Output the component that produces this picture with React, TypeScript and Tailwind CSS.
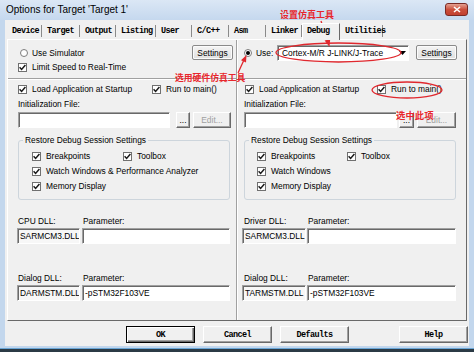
import React from "react";

const MONO = "font-['Liberation_Mono','Courier_New',monospace] font-bold text-[8.5px] tracking-[-0.6px] leading-[8px]";

function Check() {
  return (
    <span className="w-[9px] h-[9px] shrink-0 border border-[#707070] bg-white flex items-center justify-center">
      <svg width="7" height="7" viewBox="0 0 7 7">
        <path d="M0.6 3.3 L2.6 5.4 L6.4 1.1" stroke="#1a1a1a" strokeWidth="1.5" fill="none" />
      </svg>
    </span>
  );
}

function Radio({ on }: { on?: boolean }) {
  return (
    <span className="w-[8px] h-[8px] shrink-0 rounded-full border border-[#7d7d7d] bg-white flex items-center justify-center">
      {on && <span className="w-[4px] h-[4px] rounded-full bg-black" />}
    </span>
  );
}

function CheckLabel({ text, className = "" }: { text: string; className?: string }) {
  return (
    <div className={`flex items-center h-[10px] ${className}`}>
      <Check />
      <span className="ml-[5px] leading-[10px] whitespace-nowrap">{text}</span>
    </div>
  );
}

function Field({ className = "", children }: { className?: string; children?: React.ReactNode }) {
  return (
    <div
      className={`h-[16px] border border-t-[#a0a0a0] border-l-[#a0a0a0] border-r-white border-b-white shadow-[inset_1px_1px_0_#696969] flex items-center pl-[2px] whitespace-nowrap overflow-hidden ${className}`}
    >
      {children}
    </div>
  );
}

function ClassicBtn({ className = "", children, dim }: { className?: string; children?: React.ReactNode; dim?: boolean }) {
  return (
    <div
      className={`h-[16px] bg-[#f0f0f0] border border-t-white border-l-white border-r-[#696969] border-b-[#696969] shadow-[inset_-1px_-1px_0_#a0a0a0] flex items-center justify-center leading-[10px] ${dim ? "text-[#a0a0a0]" : "text-black"} ${className}`}
    >
      {children}
    </div>
  );
}

function SettingsBtn({ className = "" }: { className?: string }) {
  return (
    <div
      className={`h-[15px] w-[41px] rounded-[2px] border border-[#8a8a8a] bg-gradient-to-b from-[#f4f4f4] to-[#e0e0e0] shadow-[inset_0_0_0_1px_#fbfbfb] flex items-center justify-center leading-[10px] ${className}`}
    >
      Settings
    </div>
  );
}

function Separator() {
  return <div className="h-[2px] border-t border-t-[#a0a0a0] border-b border-b-white" />;
}

function LeftColumn() {
  return (
    <div className="w-[228px] shrink-0 flex flex-col">
      <div className="mt-[5px] h-[15px] flex items-center pl-[12px] pr-[3px]">
        <Radio />
        <span className="ml-[4px] leading-[10px]">Use Simulator</span>
        <SettingsBtn className="ml-auto" />
      </div>
      <div className="mt-[2px] h-[10px] pl-[10px]">
        <CheckLabel text="Limit Speed to Real-Time" />
      </div>
      <div className="mt-[6px]">
        <Separator />
      </div>
      <div className="mt-[4px] h-[10px] pl-[10px] flex">
        <CheckLabel text="Load Application at Startup" className="w-[134px]" />
        <CheckLabel text="Run to main()" />
      </div>
      <div className="mt-[5px] h-[10px] pl-[10px] leading-[10px]">Initialization File:</div>
      <div className="mt-[3px] h-[16px] pl-[10px] flex">
        <Field className="w-[152px] bg-white" />
        <ClassicBtn className="w-[14px] ml-[6px]">...</ClassicBtn>
        <ClassicBtn className="w-[38px] ml-[3px]" dim>
          Edit...
        </ClassicBtn>
      </div>
      <div className="pl-[10px]">
        <div className="relative mt-[12px] w-[212px] h-[60px] border border-[#cdd5dc] rounded-[3px] pt-[10px] pl-[13px] flex flex-col gap-[5px]">
          <span className="absolute top-[-6px] left-[4px] bg-[#f0f0f0] px-[2px] leading-[10px] whitespace-nowrap">
            Restore Debug Session Settings
          </span>
          <div className="flex">
            <CheckLabel text="Breakpoints" className="w-[91px]" />
            <CheckLabel text="Toolbox" />
          </div>
          <CheckLabel text="Watch Windows & Performance Analyzer" />
          <CheckLabel text="Memory Display" />
        </div>
      </div>
      <div className="mt-[16px] h-[10px] pl-[10px] flex leading-[10px]">
        <span className="w-[65px]">CPU DLL:</span>
        <span>Parameter:</span>
      </div>
      <div className="mt-[2px] pl-[9px] flex">
        <Field className="w-[63px] bg-[#f7f7f7]">SARMCM3.DLL</Field>
        <Field className="w-[148px] ml-[2px] bg-white" />
      </div>
      <div className="mt-[29px] h-[10px] pl-[10px] flex leading-[10px]">
        <span className="w-[65px]">Dialog DLL:</span>
        <span>Parameter:</span>
      </div>
      <div className="mt-[2px] pl-[9px] flex">
        <Field className="w-[63px] bg-[#f7f7f7]">DARMSTM.DLL</Field>
        <Field className="w-[148px] ml-[2px] bg-white">-pSTM32F103VE</Field>
      </div>
    </div>
  );
}

function RightColumn() {
  return (
    <div className="flex-1 flex flex-col">
      <div className="mt-[5px] h-[15px] flex items-center pl-[6px]">
        <div className="w-[33px] flex items-center">
          <Radio on />
          <span className="ml-[4px] leading-[10px]">Use:</span>
        </div>
        <div className="w-[132px] h-[16px] bg-white border border-t-[#a0a0a0] border-l-[#a0a0a0] border-r-white border-b-white shadow-[inset_1px_1px_0_#696969] flex items-center">
          <span className="pl-[4px] flex-1 leading-[10px] whitespace-nowrap overflow-hidden">Cortex-M/R J-LINK/J-Trace</span>
          <span className="w-[9px] h-[12px] mr-[1px] flex items-center justify-center">
            <svg width="7" height="4" viewBox="0 0 7 4">
              <path d="M0 0 L7 0 L3.5 4 Z" fill="#000" />
            </svg>
          </span>
        </div>
        <SettingsBtn className="ml-[7px]" />
      </div>
      <div className="mt-[2px] h-[10px]" />
      <div className="mt-[6px]">
        <Separator />
      </div>
      <div className="mt-[4px] h-[10px] pl-[7px] flex">
        <CheckLabel text="Load Application at Startup" className="w-[132px]" />
        <CheckLabel text="Run to main()" />
      </div>
      <div className="mt-[5px] h-[10px] pl-[6px] leading-[10px]">Initialization File:</div>
      <div className="mt-[3px] h-[16px] pl-[6px] flex">
        <Field className="w-[153px] bg-white" />
        <ClassicBtn className="w-[15px] ml-[2px]">...</ClassicBtn>
        <ClassicBtn className="w-[39px] ml-[3px]" dim>
          Edit...
        </ClassicBtn>
      </div>
      <div className="pl-[6px]">
        <div className="relative mt-[12px] w-[212px] h-[60px] border border-[#cdd5dc] rounded-[3px] pt-[10px] pl-[12px] flex flex-col gap-[5px]">
          <span className="absolute top-[-6px] left-[4px] bg-[#f0f0f0] px-[2px] leading-[10px] whitespace-nowrap">
            Restore Debug Session Settings
          </span>
          <div className="flex">
            <CheckLabel text="Breakpoints" className="w-[90px]" />
            <CheckLabel text="Toolbox" />
          </div>
          <CheckLabel text="Watch Windows" />
          <CheckLabel text="Memory Display" />
        </div>
      </div>
      <div className="mt-[16px] h-[10px] pl-[6px] flex leading-[10px]">
        <span className="w-[64px]">Driver DLL:</span>
        <span>Parameter:</span>
      </div>
      <div className="mt-[2px] pl-[4px] flex">
        <Field className="w-[64px] bg-[#f7f7f7]">SARMCM3.DLL</Field>
        <Field className="w-[149px] ml-[1px] bg-white" />
      </div>
      <div className="mt-[29px] h-[10px] pl-[6px] flex leading-[10px]">
        <span className="w-[64px]">Dialog DLL:</span>
        <span>Parameter:</span>
      </div>
      <div className="mt-[2px] pl-[4px] flex">
        <Field className="w-[64px] bg-[#f7f7f7]">TARMSTM.DLL</Field>
        <Field className="w-[149px] ml-[1px] bg-white">-pSTM32F103VE</Field>
      </div>
    </div>
  );
}

const TABS: { name: string; w: string }[] = [
  { name: "Device", w: "w-[35px]" },
  { name: "Target", w: "w-[38px]" },
  { name: "Output", w: "w-[36px]" },
  { name: "Listing", w: "w-[40px]" },
  { name: "User", w: "w-[36px]" },
  { name: "C/C++", w: "w-[37px]" },
  { name: "Asm", w: "w-[37px]" },
  { name: "Linker", w: "w-[36px]" },
];

function BottomBtn({ children, def, className = "" }: { children: React.ReactNode; def?: boolean; className?: string }) {
  return (
    <div
      className={`w-[69px] h-[17px] bg-[#f0f0f0] flex items-center justify-center ${MONO} ${
        def
          ? "border border-black shadow-[inset_1px_1px_0_#fff,inset_-1px_-1px_0_#696969,inset_-2px_-2px_0_#a0a0a0]"
          : "border border-t-white border-l-white border-r-[#696969] border-b-[#696969] shadow-[inset_-1px_-1px_0_#a0a0a0]"
      } ${className}`}
    >
      {children}
    </div>
  );
}

export default function App() {
  return (
    <div className="w-[474px] h-[352px] bg-[#c3d7ed] relative overflow-hidden flex flex-col font-['Liberation_Sans',Arial,sans-serif] text-[8.4px] text-black">
      <div className="h-[20px] shrink-0 bg-gradient-to-b from-[#dbe7f5] to-[#c5d8ee] flex items-start">
        <span className="ml-[6px] mt-[4px] text-[10px] leading-[12px] whitespace-nowrap">Options for Target 'Target 1'</span>
        <div className="ml-auto mr-[6px] mt-[3px] w-[23px] h-[13px] rounded-[3px] border border-[#7a2a24] bg-gradient-to-b from-[#e3a092] via-[#cb4f3c] to-[#c2402f] flex items-center justify-center">
          <svg width="8" height="7" viewBox="0 0 8 7">
            <path d="M1 1 L7 6 M7 1 L1 6" stroke="#fff" strokeWidth="1.6" />
          </svg>
        </div>
      </div>

      <div className="h-[326px] mx-[5px] bg-[#f0f0f0] flex flex-col">
        <div className="h-[19px] flex items-end pl-[2px]">
          {TABS.map((t) => (
            <div key={t.name} className={`${t.w} h-[12px] mb-[2px] border-r border-r-[#8a8a8a] pl-[5px] flex items-center ${MONO}`}>
              {t.name}
            </div>
          ))}
          <div className={`relative z-10 w-[38px] h-[17px] -mb-[1px] bg-[#f0f0f0] border-l border-t border-l-white border-t-white border-r border-r-[#696969] pl-[4px] pt-[3px] ${MONO}`}>
            Debug
          </div>
          <div className={`w-[43px] h-[12px] mb-[2px] border-r border-r-[#8a8a8a] pl-[5px] flex items-center ${MONO}`}>Utilities</div>
        </div>

        <div className="mx-[2px] h-[282px] border border-t-white border-l-white border-r-[#696969] border-b-[#696969] flex">
          <LeftColumn />
          <div className="w-[2px] shrink-0 border-l border-l-[#a0a0a0] border-r border-r-white" />
          <RightColumn />
        </div>

        <div className="mt-[5px] h-[17px] flex pl-[121px] pr-[1px] gap-[8px]">
          <BottomBtn def>OK</BottomBtn>
          <BottomBtn>Cancel</BottomBtn>
          <BottomBtn>Defaults</BottomBtn>
          <BottomBtn className="ml-auto">Help</BottomBtn>
        </div>
      </div>

      <div className="h-[2px] shrink-0" />
      <div className="h-[1px] shrink-0 bg-[#6aa6d6]" />
      <div className="h-[3px] shrink-0 bg-[#2b3a45]" />

      <span className="absolute left-[280px] top-[9px] text-[9px] leading-[11px] text-[#e8262c] font-bold font-['Noto_Sans_CJK_SC',sans-serif] whitespace-nowrap">
        设置仿真工具
      </span>
      <span className="absolute left-[175px] top-[72px] text-[8.8px] leading-[11px] text-[#e8262c] font-bold font-['Noto_Sans_CJK_SC',sans-serif] whitespace-nowrap">
        选用硬件仿真工具
      </span>
      <span className="absolute left-[396px] top-[110px] text-[9.4px] leading-[11px] text-[#e8262c] font-bold font-['Noto_Sans_CJK_SC',sans-serif] whitespace-nowrap">
        选中此项
      </span>
      <svg className="absolute left-0 top-0 pointer-events-none" width="474" height="352" viewBox="0 0 474 352">
        <ellipse cx="338.5" cy="52.5" rx="62.5" ry="9.5" fill="none" stroke="#e0282e" strokeWidth="1.3" />
        <ellipse cx="407" cy="90" rx="35" ry="8" fill="none" stroke="#e0282e" strokeWidth="1.3" />
        <line x1="321" y1="21" x2="327.5" y2="41" stroke="#e0282e" strokeWidth="1.3" />
        <path d="M329.5 47 L324.6 40.6 L330.2 39.2 Z" fill="#e0282e" />
        <line x1="238" y1="73" x2="243.5" y2="61" stroke="#e0282e" strokeWidth="1.3" />
        <path d="M246.5 55 L246 62.5 L241 60.2 Z" fill="#e0282e" />
      </svg>
    </div>
  );
}
